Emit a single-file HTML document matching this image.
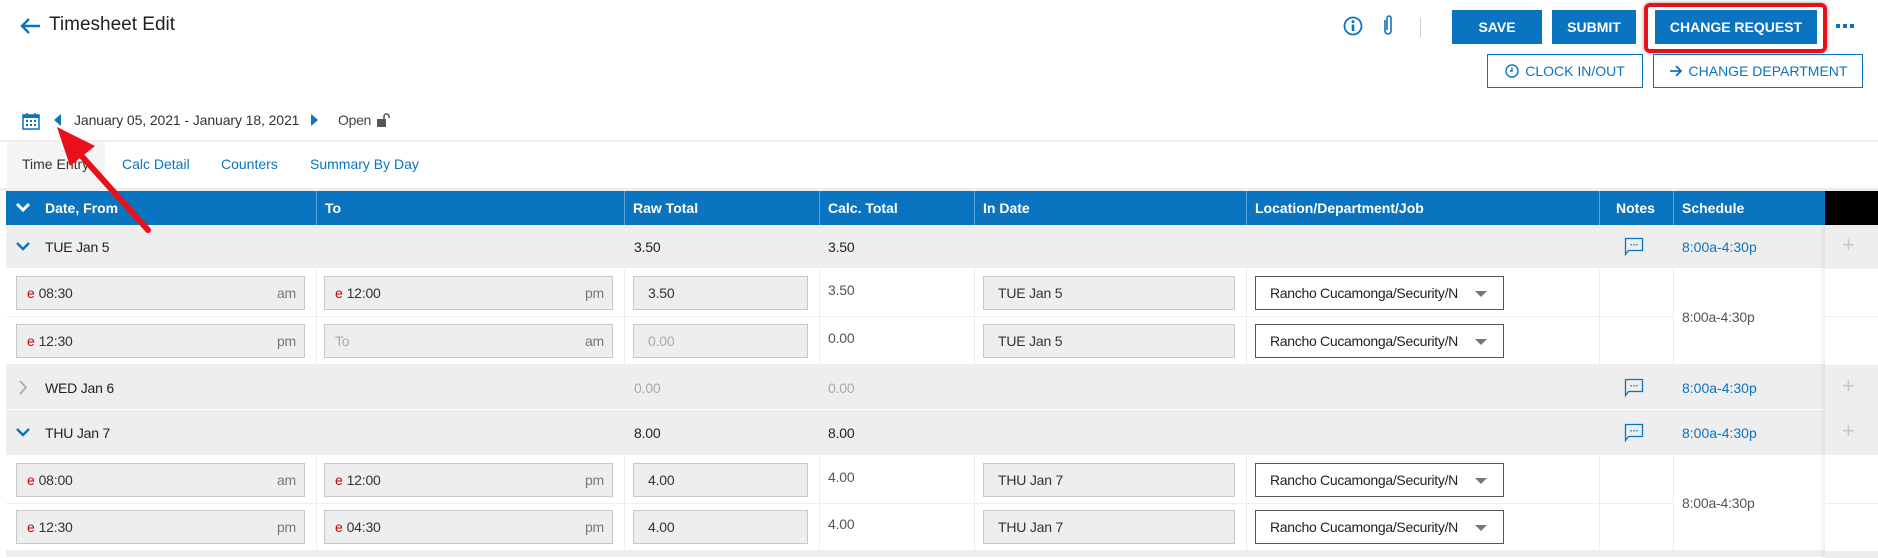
<!DOCTYPE html>
<html><head><meta charset="utf-8"><style>
*{box-sizing:border-box;margin:0;padding:0}
body{width:1878px;height:558px;overflow:hidden;background:#fff;font-family:"Liberation Sans",sans-serif;position:relative;color:#222}
.a{position:absolute}
.btn{position:absolute;background:#0b74c1;color:#fff;font-weight:bold;font-size:14px;display:flex;align-items:center;justify-content:center}
.obtn{position:absolute;border:1px solid #0b74c1;color:#0b74c1;font-size:14px;display:flex;align-items:center;justify-content:center;background:#fff;gap:6px}
.hd{position:absolute;top:191px;height:34px;background:#0b74c1;color:#fff;font-weight:bold;font-size:14px;line-height:34px;border-left:1px solid #5da3dc;padding-left:8px}
.grp{position:absolute;left:6px;width:1819px;background:#eee;border-bottom:1px solid #fff}
.row{position:absolute;left:6px;width:1819px;background:#fff;border-bottom:1px solid #eee}
.t{position:absolute;font-size:14px;color:#222;letter-spacing:-0.2px}
.inp{position:absolute;height:34px;background:#eee;border:1px solid #c8c8c8;font-size:14px;line-height:32px;padding-left:10px;color:#333;letter-spacing:-0.2px}
.inp .e{color:#c00;margin-right:4px}
.inp .ap{position:absolute;right:8px;top:0;color:#777}
.dd{position:absolute;left:1255px;width:249px;height:34px;border:1px solid #555;background:#fff;font-size:14px;line-height:32px;padding-left:14px;color:#222;letter-spacing:-0.3px}
.dd span{display:block;width:188px;overflow:hidden;white-space:nowrap}
.dd:after{content:"";position:absolute;right:16px;top:14px;border-left:6px solid transparent;border-right:6px solid transparent;border-top:6px solid #777}
.vl{position:absolute;width:1px;background:#eee}
.sch{position:absolute;left:1682px;font-size:14px;color:#0b74c1}
.plus{position:absolute;left:1842px;font-size:22px;color:#c8c8c8}
</style></head><body>

<svg class="a" style="left:20px;top:17px" width="22" height="18" viewBox="0 0 22 18"><path d="M20 9H3M9 2L2 9l7 7" fill="none" stroke="#0b74c1" stroke-width="2.4"/></svg>
<div class="a" style="left:49px;top:14px;font-size:19px;color:#222">Timesheet Edit</div>

<svg class="a" style="left:1343px;top:16px" width="20" height="20" viewBox="0 0 20 20"><circle cx="10" cy="10" r="8.5" fill="none" stroke="#0b74c1" stroke-width="1.8"/><rect x="8.7" y="8.5" width="2.6" height="6.5" fill="#0b74c1"/><circle cx="10" cy="5.6" r="1.5" fill="#0b74c1"/></svg>
<svg class="a" style="left:1382px;top:14px" width="12" height="24" viewBox="0 0 12 24"><path d="M3 6v11a3 3 0 0 0 6 0V4a2 2 0 0 0-4 0v12" fill="none" stroke="#0b74c1" stroke-width="1.6"/></svg>
<div class="a" style="left:1420px;top:18px;width:1px;height:19px;background:#ccc"></div>

<div class="btn" style="left:1452px;top:10px;width:90px;height:34px">SAVE</div>
<div class="btn" style="left:1552px;top:10px;width:84px;height:34px">SUBMIT</div>
<div class="a" style="left:1644px;top:3px;width:183px;height:50px;border:4px solid #e8101a;border-radius:6px;box-shadow:0 0 4px rgba(0,0,0,.4)"></div>
<div class="btn" style="left:1655px;top:10px;width:162px;height:34px">CHANGE REQUEST</div>
<svg class="a" style="left:1836px;top:24px" width="20" height="6"><rect x="0" y="0" width="4" height="4" fill="#0b74c1"/><rect x="7" y="0" width="4" height="4" fill="#0b74c1"/><rect x="14" y="0" width="4" height="4" fill="#0b74c1"/></svg>

<div class="obtn" style="left:1487px;top:54px;width:156px;height:34px"><svg width="14" height="14" viewBox="0 0 14 14"><circle cx="7" cy="7" r="6" fill="none" stroke="#0b74c1" stroke-width="1.4"/><path d="M7 3.5V7H5" fill="none" stroke="#0b74c1" stroke-width="1.4"/></svg>CLOCK IN/OUT</div>
<div class="obtn" style="left:1653px;top:54px;width:210px;height:34px"><svg width="14" height="12" viewBox="0 0 14 12"><path d="M1 6h11M7 1l5 5-5 5" fill="none" stroke="#0b74c1" stroke-width="1.8"/></svg>CHANGE DEPARTMENT</div>

<svg class="a" style="left:22px;top:112px" width="18" height="18" viewBox="0 0 18 18"><rect x="1" y="3" width="16" height="14" fill="none" stroke="#0b74c1" stroke-width="1.5"/><rect x="1" y="3" width="16" height="3" fill="#0b74c1"/><rect x="4" y="1" width="1.6" height="3" fill="#0b74c1"/><rect x="12.4" y="1" width="1.6" height="3" fill="#0b74c1"/><g fill="#0b74c1"><rect x="4" y="8" width="2" height="2"/><rect x="8" y="8" width="2" height="2"/><rect x="12" y="8" width="2" height="2"/><rect x="4" y="12" width="2" height="2"/><rect x="8" y="12" width="2" height="2"/><rect x="12" y="12" width="2" height="2"/></g></svg>
<svg class="a" style="left:54px;top:114px" width="8" height="12"><path d="M7 0v12L0 6z" fill="#0b74c1"/></svg>
<div class="a" style="left:74px;top:112px;font-size:14px;color:#333;letter-spacing:-0.1px">January 05, 2021 - January 18, 2021</div>
<svg class="a" style="left:311px;top:114px" width="8" height="12"><path d="M0 0v12l7-6z" fill="#0b74c1"/></svg>
<div class="a" style="left:338px;top:112px;font-size:14px;color:#444;letter-spacing:-0.3px">Open</div>
<svg class="a" style="left:377px;top:113px" width="15" height="14" viewBox="0 0 15 14"><rect x="0" y="6" width="9" height="8" fill="#555"/><path d="M7 6V3.5a2.5 2.5 0 0 1 5 0V5" fill="none" stroke="#555" stroke-width="1.6"/></svg>

<div class="a" style="left:0;top:140px;width:1878px;height:2px;background:#eee"></div>
<div class="a" style="left:7px;top:142px;width:98px;height:47px;background:#f5f5f5"></div>
<div class="a" style="left:22px;top:156px;font-size:14px;color:#333">Time Entry</div>
<div class="a" style="left:122px;top:156px;font-size:14px;color:#0b74c1">Calc Detail</div>
<div class="a" style="left:221px;top:156px;font-size:14px;color:#0b74c1">Counters</div>
<div class="a" style="left:310px;top:156px;font-size:14px;color:#0b74c1">Summary By Day</div>
<div class="a" style="left:0;top:188px;width:1878px;height:3px;background:#eee"></div>

<div class="hd" style="left:6px;width:310px;border-left:none;padding-left:39px">Date, From</div>
<svg class="a" style="left:15px;top:202px" width="16" height="11"><path d="M2 2l6 6 6-6" fill="none" stroke="#fff" stroke-width="3"/></svg>
<div class="hd" style="left:316px;width:308px">To</div>
<div class="hd" style="left:624px;width:195px">Raw Total</div>
<div class="hd" style="left:819px;width:155px">Calc. Total</div>
<div class="hd" style="left:974px;width:272px">In Date</div>
<div class="hd" style="left:1246px;width:353px">Location/Department/Job</div>
<div class="hd" style="left:1599px;width:74px;padding-left:16px">Notes</div>
<div class="hd" style="left:1673px;width:152px">Schedule</div>
<div class="a" style="left:1825px;top:191px;width:53px;height:34px;background:#000"></div>

<div class="grp" style="top:225px;height:44px"></div>
<div class="row" style="top:269px;height:48px"></div>
<div class="row" style="top:317px;height:48px"></div>
<div class="grp" style="top:365px;height:45px"></div>
<div class="grp" style="top:410px;height:46px"></div>
<div class="row" style="top:456px;height:48px"></div>
<div class="row" style="top:504px;height:47px"></div>
<div class="grp" style="top:551px;height:7px"></div>
<div class="a" style="left:1825px;top:225px;width:53px;height:333px;background:#fff;box-shadow:-3px 0 4px rgba(0,0,0,.06)"></div>
<div class="a" style="left:1825px;top:225px;width:53px;height:44px;background:#eee"></div>
<div class="a" style="left:1825px;top:365px;width:53px;height:91px;background:#eee;border-bottom:1px solid #fff"></div>
<div class="a" style="left:1825px;top:551px;width:53px;height:7px;background:#eee"></div>
<div class="a" style="left:1825px;top:316px;width:53px;height:1px;background:#eee"></div>
<div class="a" style="left:1825px;top:503px;width:53px;height:1px;background:#eee"></div>

<div class="vl" style="left:316px;top:269px;height:96px"></div><div class="vl" style="left:624px;top:269px;height:96px"></div><div class="vl" style="left:819px;top:269px;height:96px"></div><div class="vl" style="left:974px;top:269px;height:96px"></div><div class="vl" style="left:1246px;top:269px;height:96px"></div><div class="vl" style="left:1599px;top:269px;height:96px"></div><div class="vl" style="left:1673px;top:269px;height:96px"></div>
<div class="vl" style="left:316px;top:456px;height:95px"></div><div class="vl" style="left:624px;top:456px;height:95px"></div><div class="vl" style="left:819px;top:456px;height:95px"></div><div class="vl" style="left:974px;top:456px;height:95px"></div><div class="vl" style="left:1246px;top:456px;height:95px"></div><div class="vl" style="left:1599px;top:456px;height:95px"></div><div class="vl" style="left:1673px;top:456px;height:95px"></div>
<div class="a" style="left:1673px;top:316px;width:152px;height:1px;background:#fff"></div>
<div class="a" style="left:1673px;top:503px;width:152px;height:1px;background:#fff"></div>

<svg class="a" style="left:16px;top:242px" width="14" height="10"><path d="M1 1l6 6 6-6" fill="none" stroke="#0b74c1" stroke-width="2.4"/></svg>
<div class="t" style="left:45px;top:239px">TUE Jan 5</div>
<div class="t" style="left:634px;top:239px">3.50</div>
<div class="t" style="left:828px;top:239px">3.50</div>
<svg class="a" style="left:1624px;top:237px" width="20" height="20" viewBox="0 0 20 20"><path d="M1.5 1.5h17v12h-14l-3 4z" fill="none" stroke="#0b74c1" stroke-width="1.3"/><g fill="#0b74c1"><rect x="6.5" y="7" width="1.4" height="1.4"/><rect x="9.3" y="7" width="1.4" height="1.4"/><rect x="12.1" y="7" width="1.4" height="1.4"/></g></svg>
<div class="sch" style="top:239px">8:00a-4:30p</div>
<div class="plus" style="top:232px">+</div>

<div class="inp" style="left:16px;top:276px;width:289px"><span class="e">e</span>08:30<span class="ap">am</span></div>
<div class="inp" style="left:324px;top:276px;width:289px"><span class="e">e</span>12:00<span class="ap">pm</span></div>
<div class="inp" style="left:633px;top:276px;width:175px;padding-left:14px">3.50</div>
<div class="t" style="left:828px;top:282px;color:#555">3.50</div>
<div class="inp" style="left:983px;top:276px;width:252px;padding-left:14px">TUE Jan 5</div>
<div class="dd" style="top:276px"><span>Rancho Cucamonga/Security/N</span></div>

<div class="inp" style="left:16px;top:324px;width:289px"><span class="e">e</span>12:30<span class="ap">pm</span></div>
<div class="inp" style="left:324px;top:324px;width:289px;color:#aaa">To<span class="ap">am</span></div>
<div class="inp" style="left:633px;top:324px;width:175px;padding-left:14px;color:#aaa">0.00</div>
<div class="t" style="left:828px;top:330px;color:#555">0.00</div>
<div class="inp" style="left:983px;top:324px;width:252px;padding-left:14px">TUE Jan 5</div>
<div class="dd" style="top:324px"><span>Rancho Cucamonga/Security/N</span></div>
<div class="t" style="left:1682px;top:309px;color:#555">8:00a-4:30p</div>

<svg class="a" style="left:19px;top:380px" width="9" height="15"><path d="M1 1l6 6.5-6 6.5" fill="none" stroke="#aaa" stroke-width="1.8"/></svg>
<div class="t" style="left:45px;top:380px">WED Jan 6</div>
<div class="t" style="left:634px;top:380px;color:#aaa">0.00</div>
<div class="t" style="left:828px;top:380px;color:#aaa">0.00</div>
<svg class="a" style="left:1624px;top:378px" width="20" height="20" viewBox="0 0 20 20"><path d="M1.5 1.5h17v12h-14l-3 4z" fill="none" stroke="#0b74c1" stroke-width="1.3"/><g fill="#0b74c1"><rect x="6.5" y="7" width="1.4" height="1.4"/><rect x="9.3" y="7" width="1.4" height="1.4"/><rect x="12.1" y="7" width="1.4" height="1.4"/></g></svg>
<div class="sch" style="top:380px">8:00a-4:30p</div>
<div class="plus" style="top:373px">+</div>

<svg class="a" style="left:16px;top:428px" width="14" height="10"><path d="M1 1l6 6 6-6" fill="none" stroke="#0b74c1" stroke-width="2.4"/></svg>
<div class="t" style="left:45px;top:425px">THU Jan 7</div>
<div class="t" style="left:634px;top:425px">8.00</div>
<div class="t" style="left:828px;top:425px">8.00</div>
<svg class="a" style="left:1624px;top:423px" width="20" height="20" viewBox="0 0 20 20"><path d="M1.5 1.5h17v12h-14l-3 4z" fill="none" stroke="#0b74c1" stroke-width="1.3"/><g fill="#0b74c1"><rect x="6.5" y="7" width="1.4" height="1.4"/><rect x="9.3" y="7" width="1.4" height="1.4"/><rect x="12.1" y="7" width="1.4" height="1.4"/></g></svg>
<div class="sch" style="top:425px">8:00a-4:30p</div>
<div class="plus" style="top:418px">+</div>

<div class="inp" style="left:16px;top:463px;width:289px"><span class="e">e</span>08:00<span class="ap">am</span></div>
<div class="inp" style="left:324px;top:463px;width:289px"><span class="e">e</span>12:00<span class="ap">pm</span></div>
<div class="inp" style="left:633px;top:463px;width:175px;padding-left:14px">4.00</div>
<div class="t" style="left:828px;top:469px;color:#555">4.00</div>
<div class="inp" style="left:983px;top:463px;width:252px;padding-left:14px">THU Jan 7</div>
<div class="dd" style="top:463px"><span>Rancho Cucamonga/Security/N</span></div>

<div class="inp" style="left:16px;top:510px;width:289px"><span class="e">e</span>12:30<span class="ap">pm</span></div>
<div class="inp" style="left:324px;top:510px;width:289px"><span class="e">e</span>04:30<span class="ap">pm</span></div>
<div class="inp" style="left:633px;top:510px;width:175px;padding-left:14px">4.00</div>
<div class="t" style="left:828px;top:516px;color:#555">4.00</div>
<div class="inp" style="left:983px;top:510px;width:252px;padding-left:14px">THU Jan 7</div>
<div class="dd" style="top:510px"><span>Rancho Cucamonga/Security/N</span></div>
<div class="t" style="left:1682px;top:495px;color:#555">8:00a-4:30p</div>

<svg class="a" style="left:0;top:0" width="200" height="260"><path d="M148 230L78 152" stroke="#e8101a" stroke-width="6" stroke-linecap="round"/><path d="M57 127L95 146L70 166z" fill="#e8101a"/></svg>
</body></html>
